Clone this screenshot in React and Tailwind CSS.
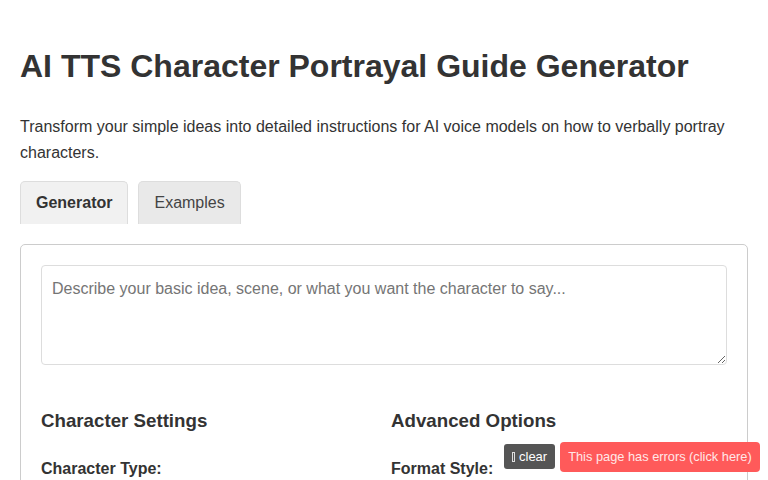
export default function App() {
  return (
    <div className="min-h-screen bg-white text-[#333] font-['Liberation_Sans',Arial,sans-serif] relative overflow-hidden h-[480px]">
      <div className="px-5 pt-[47px]">
        <h1 className="text-[32px] font-bold leading-[1.2] mb-[29px]">
          AI TTS Character Portrayal Guide Generator
        </h1>
        <p className="text-base leading-[26px] mb-[15px]">
          Transform your simple ideas into detailed instructions for AI voice models on how to verbally portray characters.
        </p>

        {/* Tabs */}
        <div className="flex gap-[10px]">
          <button className="h-[43px] px-[15px] border border-b-0 border-[#ddd] rounded-t-[5px] bg-[#f1f1f1] text-base font-bold text-[#333]">
            Generator
          </button>
          <button className="h-[43px] px-[15px] border border-b-0 border-[#ddd] rounded-t-[5px] bg-[#e9e9e9] text-base text-[#444]">
            Examples
          </button>
        </div>

        {/* Panel */}
        <div className="mt-[20px] border border-[#ccc] rounded-[5px] p-5 pb-10">
          <textarea
            className="block w-full h-[100px] border border-[#ddd] rounded-[4px] px-[10px] pt-[13px] pb-[10px] text-base leading-[1.2] placeholder:text-[#757575] outline-none resize-y"
            placeholder="Describe your basic idea, scene, or what you want the character to say..."
          />

          <div className="grid grid-cols-[330px_1fr] gap-5 mt-[45px]">
            <div>
              <h3 className="text-[18.72px] font-bold leading-[1.2] mb-[24px]">Character Settings</h3>
              <label className="block text-base font-bold">Character Type:</label>
            </div>
            <div>
              <h3 className="text-[18.72px] font-bold leading-[1.2] mb-[24px]">Advanced Options</h3>
              <label className="block text-base font-bold">Format Style:</label>
            </div>
          </div>
        </div>
      </div>

      {/* Error overlay */}
      <div className="absolute left-[504px] top-[442px] flex items-start gap-[5px]">
        <button className="mt-[2px] h-[25px] px-[8px] rounded-[3px] bg-[#555] text-[13px] text-white flex items-center gap-[4px]">
          <span className="inline-block w-[3px] h-[10px] border border-white/80" />
          clear
        </button>
        <button className="h-[30px] px-[8px] rounded-[4px] bg-[#ff5a5a] text-[12.8px] text-[#ffe8e8]">
          This page has errors (click here)
        </button>
      </div>
    </div>
  );
}
